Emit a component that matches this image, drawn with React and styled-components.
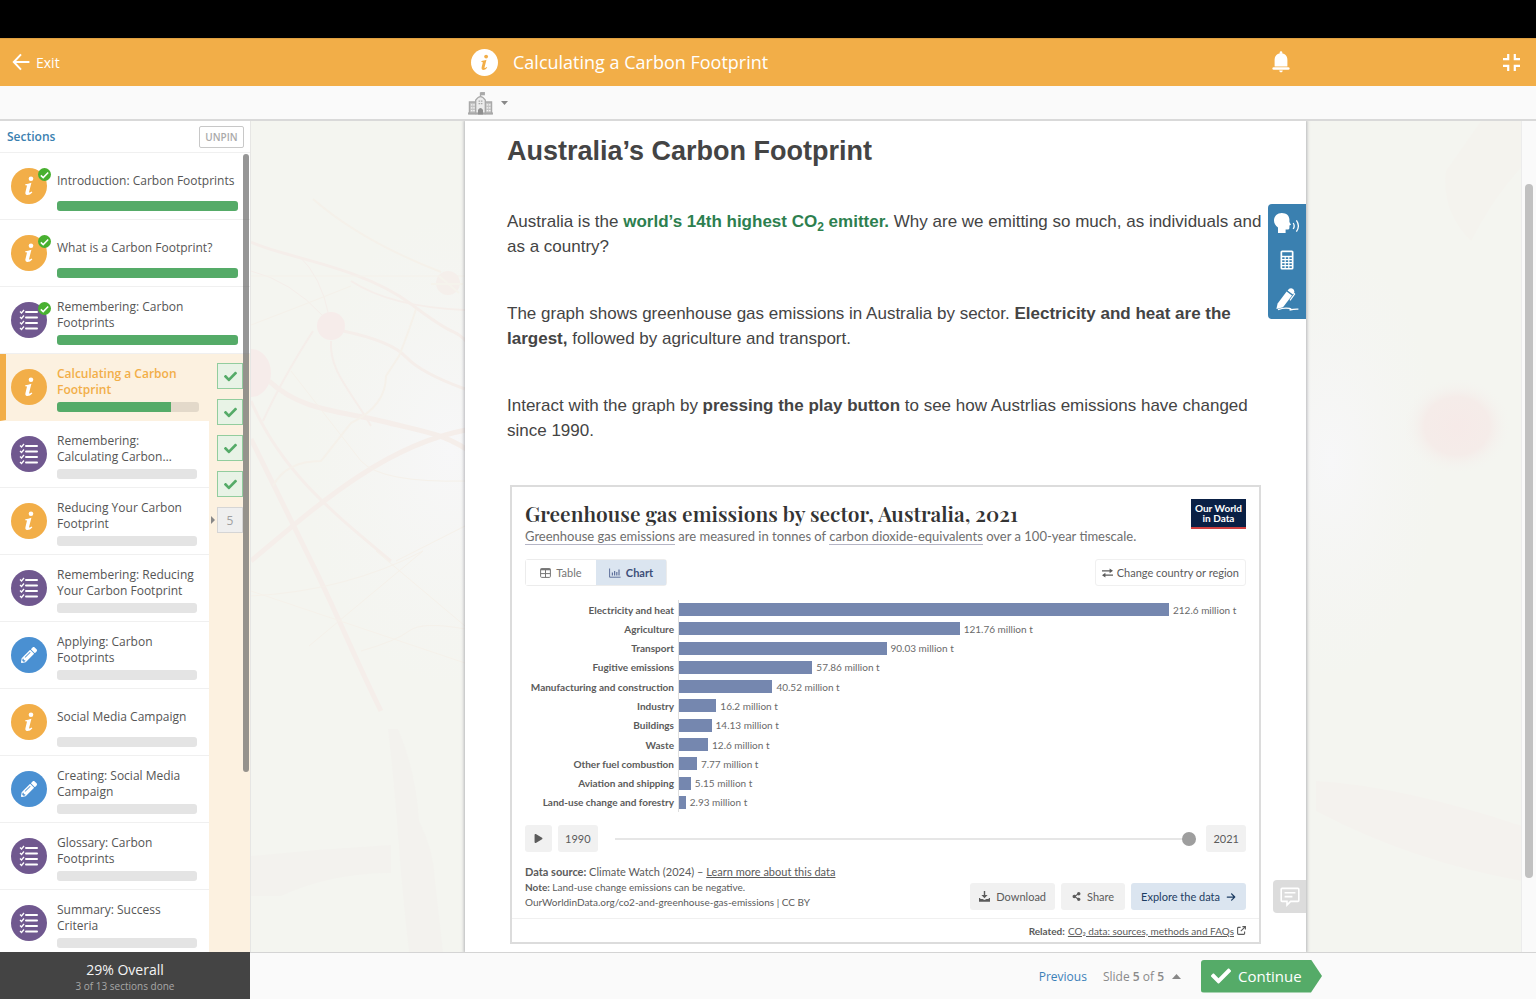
import React from "react";
import styled, { createGlobalStyle, css } from "styled-components";
import { FaPlay, FaShareAlt, FaCheck, FaPencilAlt } from "react-icons/fa";
import { FaArrowRight } from "react-icons/fa6";

const GlobalStyle = createGlobalStyle`
  * { box-sizing: border-box; }
  body { margin: 0; background: #fafafa; }
  button { font: inherit; color: inherit; border: 0; padding: 0; background: none; cursor: pointer; }
  h1, h2, h3, p, ul, ol, figure { margin: 0; padding: 0; }
  ul, ol { list-style: none; }
`;

const uiFont = `"Open Sans", "Noto Sans", sans-serif`;
const articleFont = `"Liberation Sans", Arial, sans-serif`;
const chartFont = `Lato, sans-serif`;

const Shell = styled.div`
  height: 100vh;
  display: flex;
  flex-direction: column;
  font-family: ${uiFont};
  font-size: 12px;
  color: #444;
`;
const TopStrip = styled.div`
  flex: none;
  height: 38px;
  background: #000;
`;
const pageColumns = css`
  display: grid;
  grid-template-columns: 250px 1fr minmax(0, 841px) 1fr 15px;
  align-items: center;
`;
const Header = styled.header`
  ${pageColumns}
  flex: none;
  height: 48px;
  background: #f2ae48;
  box-shadow: inset 0 1px #e0a040;
  color: #fff;
`;
const ExitLink = styled.a`
  display: flex;
  align-items: center;
  gap: 6px;
  padding-left: 12px;
  color: #fff;
  font-size: 14px;
  text-decoration: none;
`;
const HeaderMain = styled.div`
  grid-column: 3;
  display: flex;
  align-items: center;
  gap: 15px;
  padding: 0 16px 0 6px;
`;
const HeaderTitle = styled.h1`
  flex: 1;
  font-size: 18px;
  font-weight: 400;
`;
const HeaderEnd = styled.div`
  grid-column: 4 / 6;
  display: flex;
  justify-content: flex-end;
  padding-right: 16px;
`;
const IconButton = styled.button`
  display: flex;
`;
const Toolbar = styled.div`
  ${pageColumns}
  flex: none;
  height: 35px;
  background: #fafafa;
  border-bottom: 2px solid #d9d9d9;
`;
const SchoolMenu = styled.button`
  grid-column: 3;
  display: flex;
  align-items: center;
  gap: 7px;
  padding-left: 3px;
`;
const Body = styled.div`
  flex: 1;
  min-height: 0;
  display: flex;
`;

const Sidebar = styled.aside`
  flex: none;
  position: relative;
  width: 250px;
  display: flex;
  flex-direction: column;
  overflow: hidden;
  background: #fff;
`;
const SidebarHead = styled.div`
  flex: none;
  height: 32px;
  display: flex;
  align-items: center;
  justify-content: space-between;
  padding: 0 6px 0 7px;
  border-bottom: 1px solid #f0f0f0;
`;
const SidebarTitle = styled.h2`
  font-size: 12px;
  font-weight: 600;
  color: #3a80b0;
`;
const UnpinButton = styled.button`
  width: 45px;
  height: 22px;
  border: 1px solid #c8c8c8;
  border-radius: 2px;
  background: #fff;
  color: #aaa;
  font-size: 10px;
  font-weight: 600;
`;
const SectionLink = styled.a`
  height: 67px;
  display: flex;
  gap: 10px;
  padding: 12px 12px 0 11px;
  border-bottom: 1px solid #f0f0f0;
  color: #555;
  text-decoration: none;
  ${(p) => p.$active && css`
    border-left: 6px solid #f2ae48;
    border-bottom-color: #fcf1e0;
    padding-left: 5px;
    padding-right: 10px;
    background: #fcf1e0;
    color: #f2ae48;
    font-weight: 600;
  `}
`;
const SectionIcon = styled.span`
  flex: none;
  position: relative;
  width: 36px;
  height: 36px;
  margin-top: 3px;
  display: flex;
  align-items: center;
  justify-content: center;
  border-radius: 50%;
  background: ${(p) => p.$color};
  color: #fff;
`;
const DoneBadge = styled.span`
  position: absolute;
  right: -4px;
  top: 0;
  width: 13px;
  height: 13px;
  display: flex;
  align-items: center;
  justify-content: center;
  border-radius: 50%;
  background: #48b030;
`;
const SectionText = styled.span`
  flex: 1;
  min-width: 0;
`;
const SectionName = styled.span`
  display: flex;
  align-items: center;
  height: 32px;
  line-height: 16px;
  white-space: pre-line;
`;
const ProgressTrack = styled.span`
  display: block;
  height: 10px;
  margin-top: 4px;
  border-radius: 3px;
  overflow: hidden;
  background: ${(p) => (p.$active ? "#e3d9ca" : "#e4e4e4")};
`;
const ProgressFill = styled.span`
  display: block;
  height: 100%;
  background: #55ab68;
`;
const OpenGroup = styled.div`
  display: flex;
  background: #fcf1e0;
`;
const OpenSections = styled.div`
  width: 209px;
  background: #fff;
`;
const Steps = styled.ol`
  flex: 1;
  display: flex;
  flex-direction: column;
  gap: 10px;
  padding: 9px 7px 0 2px;
`;
const Step = styled.li`
  display: flex;
  align-items: center;
  justify-content: space-between;
  color: #888;
`;
const StepBox = styled.button`
  width: 26px;
  height: 26px;
  margin-left: auto;
  display: flex;
  align-items: center;
  justify-content: center;
  border: 1px solid ${(p) => (p.$done ? "#92cd9e" : "#d5d5d5")};
  background: ${(p) => (p.$done ? "#e8f3e6" : "#efefef")};
  color: ${(p) => (p.$done ? "#55ab68" : "#a0a0a0")};
`;
const SidebarThumb = styled.div`
  position: absolute;
  top: 33px;
  right: 1px;
  width: 6px;
  height: calc(100% - 213px);
  border-radius: 3px;
  background: rgba(100, 100, 100, 0.68);
`;

const Stage = styled.main`
  flex: 1;
  min-width: 0;
  position: relative;
  display: flex;
  justify-content: center;
  background: #f4f5f0;
  overflow: hidden;
`;
const Backdrop = styled.svg`
  position: absolute;
  inset: 0;
  width: 100%;
  height: 100%;
  border-left: 1px solid #e6e6e4;
`;
const Card = styled.article`
  position: relative;
  width: 100%;
  max-width: 841px;
  padding: 12px 45px 0 42px;
  background: #fff;
  box-shadow: 0 0 3px 1px rgba(120, 120, 130, 0.5);
  font-family: ${articleFont};
`;
const ArticleTitle = styled.h2`
  margin-bottom: 40px;
  font-size: 27px;
  line-height: 36px;
  color: #444;
`;
const Paragraph = styled.p`
  margin: 0 -12px 42px 0;
  font-size: 17px;
  line-height: 25px;
  color: #444;
  sub { font-size: 12px; line-height: 0; }
`;
const Highlight = styled.strong`
  color: #2d7f4f;
`;
const ToolPanel = styled.div`
  position: absolute;
  top: 83px;
  right: 0;
  width: 38px;
  height: 115px;
  display: flex;
  flex-direction: column;
  align-items: center;
  justify-content: space-around;
  border-radius: 4px 0 0 4px;
  background: #3a80b0;
`;
const CommentButton = styled.button`
  position: absolute;
  right: 0;
  bottom: 39px;
  width: 33px;
  height: 33px;
  display: flex;
  align-items: center;
  justify-content: center;
  border-radius: 4px 0 0 4px;
  background: #dcdcdc;
`;
const ScrollStrip = styled.div`
  flex: none;
  width: 15px;
  padding: 63px 3px 74px 3px;
  border-left: 1px solid #ececec;
  background: #fafafa;
`;
const ScrollThumb = styled.div`
  height: 100%;
  border-radius: 4px;
  background: #c1c1c1;
`;

const ChartFrame = styled.figure`
  margin-left: 3px;
  border: 2px solid #dcdcdc;
  padding: 12px 13px 0;
  font-family: ${chartFont};
  font-size: 11px;
  color: #5b5b5b;
`;
const ChartHead = styled.div`
  display: flex;
  justify-content: space-between;
  align-items: flex-start;
`;
const ChartTitle = styled.h3`
  font-family: "Playfair Display", "Liberation Serif", serif;
  font-size: 21px;
  font-weight: 600;
  line-height: 28px;
  color: #333;
`;
const ChartSubtitle = styled.p`
  font-size: 13px;
  line-height: 18px;
  color: #6e6e6e;
`;
const Term = styled.a`
  color: inherit;
  text-decoration: none;
  border-bottom: 1px solid #b5b5c5;
`;
const DataLogo = styled.div`
  width: 55px;
  height: 30px;
  padding-top: 4px;
  border-bottom: 2px solid #d04040;
  background: #0a2045;
  color: #fff;
  font-size: 10px;
  font-weight: 700;
  line-height: 10px;
  text-align: center;
`;
const ChartControls = styled.div`
  display: flex;
  justify-content: space-between;
  margin: 14px 0;
`;
const TabGroup = styled.div`
  display: flex;
  height: 27px;
  border: 1px solid #ececec;
  border-radius: 3px;
`;
const Tab = styled.button`
  width: 70px;
  display: flex;
  align-items: center;
  justify-content: center;
  gap: 5px;
  background: ${(p) => (p.$on ? "#dbe5f0" : "#fff")};
  color: ${(p) => (p.$on ? "#3d4e78" : "#757575")};
  font-weight: ${(p) => (p.$on ? 700 : 400)};
`;
const RegionButton = styled.button`
  height: 27px;
  display: flex;
  align-items: center;
  gap: 4px;
  padding: 0 6px;
  border: 1px solid #f0f0f0;
  border-radius: 3px;
`;
const Bars = styled.ul`
  height: 212px;
  display: grid;
  grid-auto-rows: 1fr;
  font-size: 10px;
`;
const BarRow = styled.li`
  display: grid;
  grid-template-columns: 149px 1fr;
  column-gap: 4px;
`;
const BarLabel = styled.span`
  align-self: center;
  text-align: right;
  font-weight: 700;
  white-space: nowrap;
`;
const BarLane = styled.span`
  display: flex;
  align-items: center;
  gap: 4px;
  border-left: 1px solid #dedede;
  color: #6a6a6a;
`;
const Bar = styled.span`
  height: 13px;
  background: #7587af;
`;
const Timeline = styled.div`
  display: flex;
  align-items: center;
  margin-top: 13px;
`;
const GreyButton = styled.button`
  height: 27px;
  display: flex;
  align-items: center;
  justify-content: center;
  gap: 6px;
  padding: 0 ${(p) => p.$pad || 7}px;
  border-radius: 3px;
  background: ${(p) => (p.$blue ? "#dbe5f0" : "#f1f1f1")};
  color: ${(p) => (p.$blue ? "#1d3d63" : "#5b5b5b")};
`;
const PlayButton = styled(GreyButton)`
  width: 27px;
  margin-right: 6px;
`;
const YearSlider = styled.input`
  flex: 1;
  min-width: 0;
  height: 14px;
  margin: 0 10px 0 17px;
  appearance: none;
  background: linear-gradient(#e6e6e6, #e6e6e6) center / 100% 2px no-repeat;
  &::-webkit-slider-thumb {
    appearance: none;
    width: 14px;
    height: 14px;
    border-radius: 50%;
    background: #9e9e9e;
  }
`;
const ChartFoot = styled.div`
  display: flex;
  justify-content: space-between;
  align-items: flex-end;
  margin-top: 11px;
  padding-bottom: 8px;
`;
const Sources = styled.div`
  font-size: 10px;
  line-height: 15px;
`;
const SourceLine = styled.p`
  font-size: 11px;
  line-height: 17px;
`;
const TextLink = styled.a`
  color: inherit;
`;
const Actions = styled.div`
  display: flex;
  gap: 6px;
`;
const Related = styled.div`
  display: flex;
  align-items: center;
  justify-content: flex-end;
  gap: 3px;
  height: 24px;
  margin: 0 -13px;
  padding: 0 13px;
  border-top: 1px solid #f0f0f0;
  font-size: 10px;
`;

const Footer = styled.footer`
  flex: none;
  height: 47px;
  ${pageColumns}
  background: #fafafa;
  border-top: 1px solid #d4d4d4;
`;
const Overall = styled.div`
  align-self: stretch;
  margin-top: -1px;
  padding-top: 8px;
  background: #444;
  color: #f4f4f4;
  text-align: center;
  font-size: 14px;
  line-height: 19px;
`;
const OverallNote = styled.div`
  font-size: 10px;
  line-height: 15px;
  color: #a8a8a8;
`;
const FooterNav = styled.nav`
  grid-column: 3;
  display: flex;
  align-items: center;
  justify-content: flex-end;
  gap: 16px;
  margin-right: -16px;
  color: #8a8a8a;
`;
const PreviousLink = styled.a`
  color: #3a80b8;
  text-decoration: none;
`;
const SlideMenu = styled.button`
  display: flex;
  align-items: center;
  gap: 8px;
  margin-right: 4px;
  b { font-weight: 600; }
`;
const ContinueButton = styled.button`
  width: 121px;
  height: 33px;
  display: flex;
  align-items: center;
  gap: 7px;
  padding-left: 10px;
  border-radius: 3px 0 0 3px;
  background: #55ab68;
  clip-path: polygon(0 0, 110px 0, 100% 50%, 110px 100%, 0 100%);
  color: #fff;
  font-size: 15px;
`;

const InfoGlyph = ({ size = 22, color = "#fff" }) => (
  <svg width={size} height={size} viewBox="0 0 20 20" fill="none" stroke={color} aria-hidden="true">
    <circle cx="11.8" cy="3.4" r="2.1" fill={color} stroke="none" />
    <path d="M6.6 8.4 C8.4 8.2 10 7.8 12.2 7 L10 15.6 Q10 16.6 12.6 15 L13 15.8 Q10.8 18.4 8.2 18.2 Q6.2 17.8 6.8 15.4 L8.2 9.6 L6.6 9.4 Z" fill={color} stroke="none" />
  </svg>
);
const ListGlyph = () => (
  <svg width="20" height="22" viewBox="0 0 20 22" fill="none" stroke="#fff" aria-hidden="true">
    {[3, 8.5, 14, 19.5].map((y) => (
      <g key={y}>
        <path d={`M7 ${y} H18`} strokeWidth="2" strokeLinecap="round" />
        <path d={`M1 ${y - 0.5} l1.5 1.5 l2.5-3`} strokeWidth="1.3" />
      </g>
    ))}
  </svg>
);
const SchoolIcon = () => (
  <svg width="25" height="24" viewBox="0 0 26 24" fill="none" stroke="#a9a9a9" strokeWidth="1.4" aria-hidden="true">
    <path d="M1.5 11 H8 V23 H1.5 Z M18 11 H24.5 V23 H18 Z" fill="#c4c4c4" />
    <path d="M8 23 V9 Q13 1.6 18 9 V23 Z" fill="#ececec" />
    <path d="M13 5 V1" />
    <path d="M13 .6 h4.6 v3.4 H13 z" fill="#a9a9a9" stroke="none" />
    <path d="M0 21.8 h26 V24 H0 z" fill="#a9a9a9" stroke="none" />
    <path d="M10.4 24 v-5 q2.6-3.6 5.2 0 v5 z" fill="#8f8f8f" stroke="none" />
    <path d="M3 14 h4 M3 17 h4 M3 20 h4 M19.4 14 h4 M19.4 17 h4 M19.4 20 h4" stroke="#f4f4f4" strokeDasharray="1.6 .8" />
    <path d="M11 10 h4 M11 12.6 h4" strokeDasharray="1.6 .8" />
  </svg>
);
const BellIcon = () => (
  <svg width="18" height="22" viewBox="0 0 18 22" fill="#fff" aria-hidden="true">
    <circle cx="9" cy="1.6" r="1.3" />
    <path d="M2.6 15.6 V9 C2.6 4.5 5.4 2.2 9 2.2 S15.4 4.5 15.4 9 V15.6 Z" />
    <rect x=".4" y="16.2" width="17.2" height="2.6" rx="1.3" />
    <path d="M7.2 19.6 h3.6 a1.8 1.8 0 0 1 -3.6 0 z" />
  </svg>
);
const Triangle = ({ up }) => (
  <svg width="9" height="5" viewBox="0 0 9 5" fill="#888" aria-hidden="true">
    <path d={up ? "M0 5 L4.5 0 L9 5 Z" : "M1 1 H8 L4.5 5 Z"} />
  </svg>
);
const SpeakIcon = () => (
  <svg width="26" height="22" viewBox="0 0 26 22" fill="#fff" aria-hidden="true">
    <path d="M4 21 V15.5 C1.4 13.6 0 11.4 0 8.6 C0 4 3.4 1 7.8 1 C12.4 1 15.4 3.8 15.4 7.6 V10 L17 12.8 L15.4 13.6 V16 Q15.4 17.6 13.6 17.5 H11.6 V21 Z" />
    <path d="M19.2 11 q2 3 0 6 M22.4 8.4 q4 5.6 0 11.2" fill="none" stroke="#fff" strokeWidth="1.3" />
  </svg>
);
const CalculatorIcon = () => (
  <svg width="14" height="20" viewBox="0 0 14 20" aria-hidden="true">
    <rect x=".5" y=".5" width="13" height="19" rx="1.6" fill="#fff" />
    <rect x="2.2" y="2.2" width="9.6" height="3.6" fill="#3a80b0" />
    {[8, 11, 14, 17].map((y) => (
      <path key={y} d={`M2.2 ${y + 0.2} h2.4 m1.2 0 h2.4 m1.2 0 h2.4`} stroke="#3a80b0" strokeWidth="1.7" />
    ))}
  </svg>
);
const PenIcon = () => (
  <svg width="24" height="24" viewBox="0 0 24 24" fill="#fff" aria-hidden="true">
    <path d="M1.4 22 L2.6 16.4 L11.6 4.6 L17 8.6 L8 20.2 Z" />
    <path d="M12.6 3.6 Q15 -.2 18.4 2.2 Q20.4 4.8 18 7.6 Z" />
    <path d="M18.6 6 L19.6 7 L15 13.4" fill="none" stroke="#fff" strokeWidth="1.2" />
    <path d="M3 22.6 Q9 20.4 14.4 21.4 Q17.4 22.2 14.6 23 Q19 22 23.4 22.2" fill="none" stroke="#fff" strokeWidth="1.3" />
  </svg>
);

const kinds = {
  info: { color: "#f2ae48", glyph: <InfoGlyph /> },
  quiz: { color: "#70588f", glyph: <ListGlyph /> },
  task: { color: "#4a90d2", glyph: <FaPencilAlt size={16} /> },
};
const finished = [
  { kind: "info", name: "Introduction: Carbon Footprints" },
  { kind: "info", name: "What is a Carbon Footprint?" },
  { kind: "quiz", name: "Remembering: Carbon\nFootprints" },
];
const upcoming = [
  { kind: "info", name: "Calculating a Carbon\nFootprint", active: true, progress: 80 },
  { kind: "quiz", name: "Remembering:\nCalculating Carbon…" },
  { kind: "info", name: "Reducing Your Carbon\nFootprint" },
  { kind: "quiz", name: "Remembering: Reducing\nYour Carbon Footprint" },
  { kind: "task", name: "Applying: Carbon\nFootprints" },
  { kind: "info", name: "Social Media Campaign" },
  { kind: "task", name: "Creating: Social Media\nCampaign" },
  { kind: "quiz", name: "Glossary: Carbon\nFootprints" },
  { kind: "quiz", name: "Summary: Success\nCriteria" },
];
const emissions = [
  ["Electricity and heat", 212.6],
  ["Agriculture", 121.76],
  ["Transport", 90.03],
  ["Fugitive emissions", 57.86],
  ["Manufacturing and construction", 40.52],
  ["Industry", 16.2],
  ["Buildings", 14.13],
  ["Waste", 12.6],
  ["Other fuel combustion", 7.77],
  ["Aviation and shipping", 5.15],
  ["Land-use change and forestry", 2.93],
];
const axisMax = 246;

function Section({ kind, name, active, done, progress = 0 }) {
  return (
    <SectionLink href="#section" $active={active}>
      <SectionIcon $color={kinds[kind].color}>
        {kinds[kind].glyph}
        {done && (
          <DoneBadge>
            <svg width="9" height="8" viewBox="0 0 9 8" fill="none" stroke="#fff" strokeWidth="1.5" aria-hidden="true">
              <path d="M.8 4.4 L3.2 6.6 L8.2 1.4" />
            </svg>
          </DoneBadge>
        )}
      </SectionIcon>
      <SectionText>
        <SectionName>{name}</SectionName>
        <ProgressTrack $active={active}>
          <ProgressFill style={{ width: `${done ? 100 : progress}%` }} />
        </ProgressTrack>
      </SectionText>
    </SectionLink>
  );
}

function Neurons() {
  return (
    <Backdrop viewBox="0 0 1271 831" preserveAspectRatio="xMinYMin slice" fill="none" aria-hidden="true">
      <defs>
        <radialGradient id="cell">
          <stop offset="0" stopColor="#f6eae8" />
          <stop offset=".6" stopColor="#f5ece9" />
          <stop offset="1" stopColor="#f4f4f0" stopOpacity="0" />
        </radialGradient>
        <radialGradient id="pale">
          <stop offset="0" stopColor="#f7f7f8" />
          <stop offset="1" stopColor="#f5f5f4" stopOpacity="0" />
        </radialGradient>
      </defs>
      <ellipse cx="200" cy="330" rx="150" ry="240" fill="url(#pale)" />
      <ellipse cx="1080" cy="340" rx="110" ry="220" fill="url(#pale)" />
      <path d="M0 735 Q70 728 140 724 V752 Q80 752 30 775 H0 Z" fill="#f3f2ee" />
      <path d="M137 608 L147 608 Q165 650 168 700 Q183 730 184 760 L192 831 H158 Q150 760 146 700 Q142 650 137 608 Z" fill="#f3f2ee" />
      <path d="M1065 660 Q1150 665 1271 705 V760 Q1160 740 1065 690 Z" fill="#f4f2ee" />
      <path d="M1230 0 H1271 V45 Q1240 80 1220 120 Q1190 90 1195 50 Z" fill="#f4f3ee" />
      <ellipse cx="1206" cy="305" rx="54" ry="48" fill="url(#cell)" />
      <g stroke="#f5eeea">
        <path d="M0 121 C30 136 110 145 160 183 S200 205 215 220" strokeWidth="3" />
        <path d="M100 160 Q140 186 214 189" strokeWidth="2" />
        <path d="M92 210 Q140 220 155 236 T214 268" strokeWidth="3" />
        <path d="M80 220 C78 250 100 270 120 305" strokeWidth="2" />
        <path d="M62 210 Q30 260 12 300" strokeWidth="2" />
        <path d="M18 260 C50 290 90 290 130 300 S190 312 215 328" strokeWidth="5" />
        <path d="M0 440 C60 390 130 325 215 309" strokeWidth="5" />
        <path d="M0 318 L60 440 C85 490 105 540 130 590" strokeWidth="5" />
        <path d="M0 280 C30 350 80 390 140 440" strokeWidth="3" />
        <path d="M78 195 Q70 155 48 135 M72 195 Q40 160 0 150" strokeWidth="1" />
      </g>
      <g stroke="#f5f1ea">
        <path d="M62 78 Q110 120 190 151 M165 188 Q158 210 148 235 L135 255 Q135 285 100 302 L70 340 Q35 340 22 365" strokeWidth="2" />
        <path d="M0 475 Q95 470 172 430 M58 525 L172 430 M125 430 L214 505 M0 470 L214 542 M110 530 Q145 520 158 510 T214 508" strokeWidth="1" />
        <path d="M0 155 H214 M0 204 Q50 185 100 165 M40 250 L110 340 Q130 362 214 360 M145 440 L214 405" strokeWidth="1" />
      </g>
      <circle cx="80" cy="205" r="14" fill="#f6ecea" />
      <ellipse cx="0" cy="252" rx="20" ry="24" fill="#f6ecea" />
      <circle cx="197" cy="162" r="12" fill="#f5efeb" />
      <path d="M188 155 L208 172 M180 163 H212" stroke="#f5f3ec" strokeWidth="2" />
    </Backdrop>
  );
}

function EmissionsChart() {
  return (
    <ChartFrame>
      <ChartHead>
        <div>
          <ChartTitle>Greenhouse gas emissions by sector, Australia, 2021</ChartTitle>
          <ChartSubtitle>
            <Term href="#ghg">Greenhouse gas emissions</Term> are measured in tonnes of{" "}
            <Term href="#co2e">carbon dioxide-equivalents</Term> over a 100-year timescale.
          </ChartSubtitle>
        </div>
        <DataLogo>Our World<br />in Data</DataLogo>
      </ChartHead>
      <ChartControls>
        <TabGroup>
          <Tab>
            <svg width="11" height="10" viewBox="0 0 11 10" fill="none" stroke="#757575" aria-hidden="true">
              <rect x=".6" y=".6" width="9.8" height="8.8" rx="1" />
              <path d="M.6 1.4 H10.4" strokeWidth="1.8" />
              <path d="M.6 5.6 H10.4 M5.5 2 V9.4" />
            </svg>
            Table
          </Tab>
          <Tab $on>
            <svg width="12" height="10" viewBox="0 0 12 10" fill="none" stroke="#5f719c" aria-hidden="true">
              <path d="M.6 .5 V9.2 H11.6" />
              <path d="M3.4 7.4 V4.6 M5.6 7.4 V3 M7.8 7.4 V4 M10 7.4 V1.4" strokeWidth="1.2" />
            </svg>
            Chart
          </Tab>
        </TabGroup>
        <RegionButton>
          <svg width="11" height="10" viewBox="0 0 11 10" aria-hidden="true">
            <path d="M0 2.8 H9 M11 7.2 H2" stroke="#5b5b5b" strokeWidth="1.3" />
            <path d="M7.6 .4 L11 2.8 L7.6 5.2 Z M3.4 4.8 L0 7.2 L3.4 9.6 Z" fill="#5b5b5b" />
          </svg>
          Change country or region
        </RegionButton>
      </ChartControls>
      <Bars>
        {emissions.map(([label, value]) => (
          <BarRow key={label}>
            <BarLabel>{label}</BarLabel>
            <BarLane>
              <Bar style={{ width: `${(value / axisMax) * 100}%` }} />
              {value} million t
            </BarLane>
          </BarRow>
        ))}
      </Bars>
      <Timeline>
        <PlayButton aria-label="Play"><FaPlay size={9} /></PlayButton>
        <GreyButton>1990</GreyButton>
        <YearSlider type="range" min="1990" max="2021" defaultValue="2021" aria-label="Year" />
        <GreyButton>2021</GreyButton>
      </Timeline>
      <ChartFoot>
        <Sources>
          <SourceLine>
            <b>Data source:</b> Climate Watch (2024) – <TextLink href="#data">Learn more about this data</TextLink>
          </SourceLine>
          <p><b>Note:</b> Land-use change emissions can be negative.</p>
          <p>OurWorldinData.org/co2-and-greenhouse-gas-emissions | CC BY</p>
        </Sources>
        <Actions>
          <GreyButton $pad={9}>
            <svg width="11" height="11" viewBox="0 0 11 11" fill="#5b5b5b" aria-hidden="true">
              <path d="M4.8 0 h1.4 v4 h2.4 L5.5 7.2 L2.4 4 h2.4 z" />
              <path d="M.6 7 V10 H10.4 V7" fill="none" stroke="#5b5b5b" strokeWidth="1.3" />
              <path d="M.6 8 h3 l1.9 1 1.9-1 h3 v2 H.6 z" />
            </svg>
            Download
          </GreyButton>
          <GreyButton $pad={11}><FaShareAlt size={9} />Share</GreyButton>
          <GreyButton $pad={10} $blue>Explore the data <FaArrowRight size={10} /></GreyButton>
        </Actions>
      </ChartFoot>
      <Related>
        <b>Related:</b>
        <TextLink href="#faq">CO₂ data: sources, methods and FAQs</TextLink>
        <svg width="9" height="9" viewBox="0 0 9 9" fill="none" stroke="#5b5b5b" strokeWidth="1.1" aria-hidden="true">
          <path d="M3.6 1.4 H1.4 Q.6 1.4 .6 2.2 V7.6 Q.6 8.4 1.4 8.4 H6.8 Q7.6 8.4 7.6 7.6 V5.4 M5.4 .6 H8.4 V3.6 M8.4 .6 L3.8 5.2" />
        </svg>
      </Related>
    </ChartFrame>
  );
}

export default function App() {
  return (
    <Shell>
      <GlobalStyle />
      <TopStrip />
      <Header>
        <ExitLink href="#exit">
          <svg width="18" height="18" viewBox="0 0 18 18" fill="none" stroke="#fff" strokeWidth="2" aria-hidden="true">
            <path d="M9 1.4 L1.8 9 L9 16.6 M1.8 9 H17.4" />
          </svg>
          Exit
        </ExitLink>
        <HeaderMain>
          <svg width="27" height="27" viewBox="0 0 27 27" aria-hidden="true">
            <circle cx="13.5" cy="13.5" r="13.5" fill="#fff" />
            <g transform="translate(4.5 4.5)"><InfoGlyph size={18} color="#f2ae48" /></g>
          </svg>
          <HeaderTitle>Calculating a Carbon Footprint</HeaderTitle>
          <IconButton aria-label="Notifications"><BellIcon /></IconButton>
        </HeaderMain>
        <HeaderEnd>
          <IconButton aria-label="Leave full screen">
            <svg width="17" height="17" viewBox="0 0 17 17" fill="none" stroke="#fff" strokeWidth="2.2" aria-hidden="true">
              <path d="M0 5.2 H5.2 V0 M11.8 0 V5.2 H17 M0 11.8 H5.2 V17 M11.8 17 V11.8 H17" />
            </svg>
          </IconButton>
        </HeaderEnd>
      </Header>
      <Toolbar>
        <SchoolMenu aria-label="School menu"><SchoolIcon /><Triangle /></SchoolMenu>
      </Toolbar>
      <Body>
        <Sidebar>
          <SidebarHead>
            <SidebarTitle>Sections</SidebarTitle>
            <UnpinButton>UNPIN</UnpinButton>
          </SidebarHead>
          <nav>
            {finished.map((s) => <Section key={s.name} {...s} done />)}
            <OpenGroup>
              <OpenSections>
                {upcoming.map((s) => <Section key={s.name} {...s} />)}
              </OpenSections>
              <Steps>
                {[1, 2, 3, 4].map((n) => (
                  <Step key={n}>
                    <StepBox $done aria-label={`Slide ${n}`}><FaCheck size={13} /></StepBox>
                  </Step>
                ))}
                <Step>
                  <svg width="4" height="8" viewBox="0 0 4 8" fill="#888" aria-hidden="true"><path d="M0 0 L4 4 L0 8 Z" /></svg>
                  <StepBox>5</StepBox>
                </Step>
              </Steps>
            </OpenGroup>
          </nav>
          <SidebarThumb />
        </Sidebar>
        <Stage>
          <Neurons />
          <Card>
            <ArticleTitle>Australia’s Carbon Footprint</ArticleTitle>
            <Paragraph>
              Australia is the <Highlight>world’s 14th highest CO<sub>2</sub> emitter.</Highlight> Why are we emitting so
              much, as individuals and as a country?
            </Paragraph>
            <Paragraph>
              The graph shows greenhouse gas emissions in Australia by sector.{" "}
              <b>Electricity and heat are the largest,</b> followed by agriculture and transport.
            </Paragraph>
            <Paragraph>
              Interact with the graph by <b>pressing the play button</b> to see how Austrlias emissions have changed
              since 1990.
            </Paragraph>
            <EmissionsChart />
            <ToolPanel>
              <IconButton aria-label="Read aloud"><SpeakIcon /></IconButton>
              <IconButton aria-label="Calculator"><CalculatorIcon /></IconButton>
              <IconButton aria-label="Annotate"><PenIcon /></IconButton>
            </ToolPanel>
            <CommentButton aria-label="Comments">
              <svg width="20" height="20" viewBox="0 0 20 20" fill="none" stroke="#fff" strokeWidth="1.6" aria-hidden="true">
                <path d="M2 1.4 H18 Q18.8 1.4 18.8 2.2 V13.6 Q18.8 14.4 18 14.4 H10.6 L7 18 V14.4 H2 Q1.2 14.4 1.2 13.6 V2.2 Q1.2 1.4 2 1.4 Z M4.6 5.8 H15.4 M4.6 9.6 H12.4" />
              </svg>
            </CommentButton>
          </Card>
        </Stage>
        <ScrollStrip><ScrollThumb /></ScrollStrip>
      </Body>
      <Footer>
        <Overall>
          29% Overall
          <OverallNote>3 of 13 sections done</OverallNote>
        </Overall>
        <FooterNav>
          <PreviousLink href="#previous">Previous</PreviousLink>
          <SlideMenu><span>Slide <b>5</b> of <b>5</b></span><Triangle up /></SlideMenu>
          <ContinueButton><FaCheck size={20} />Continue</ContinueButton>
        </FooterNav>
      </Footer>
    </Shell>
  );
}
